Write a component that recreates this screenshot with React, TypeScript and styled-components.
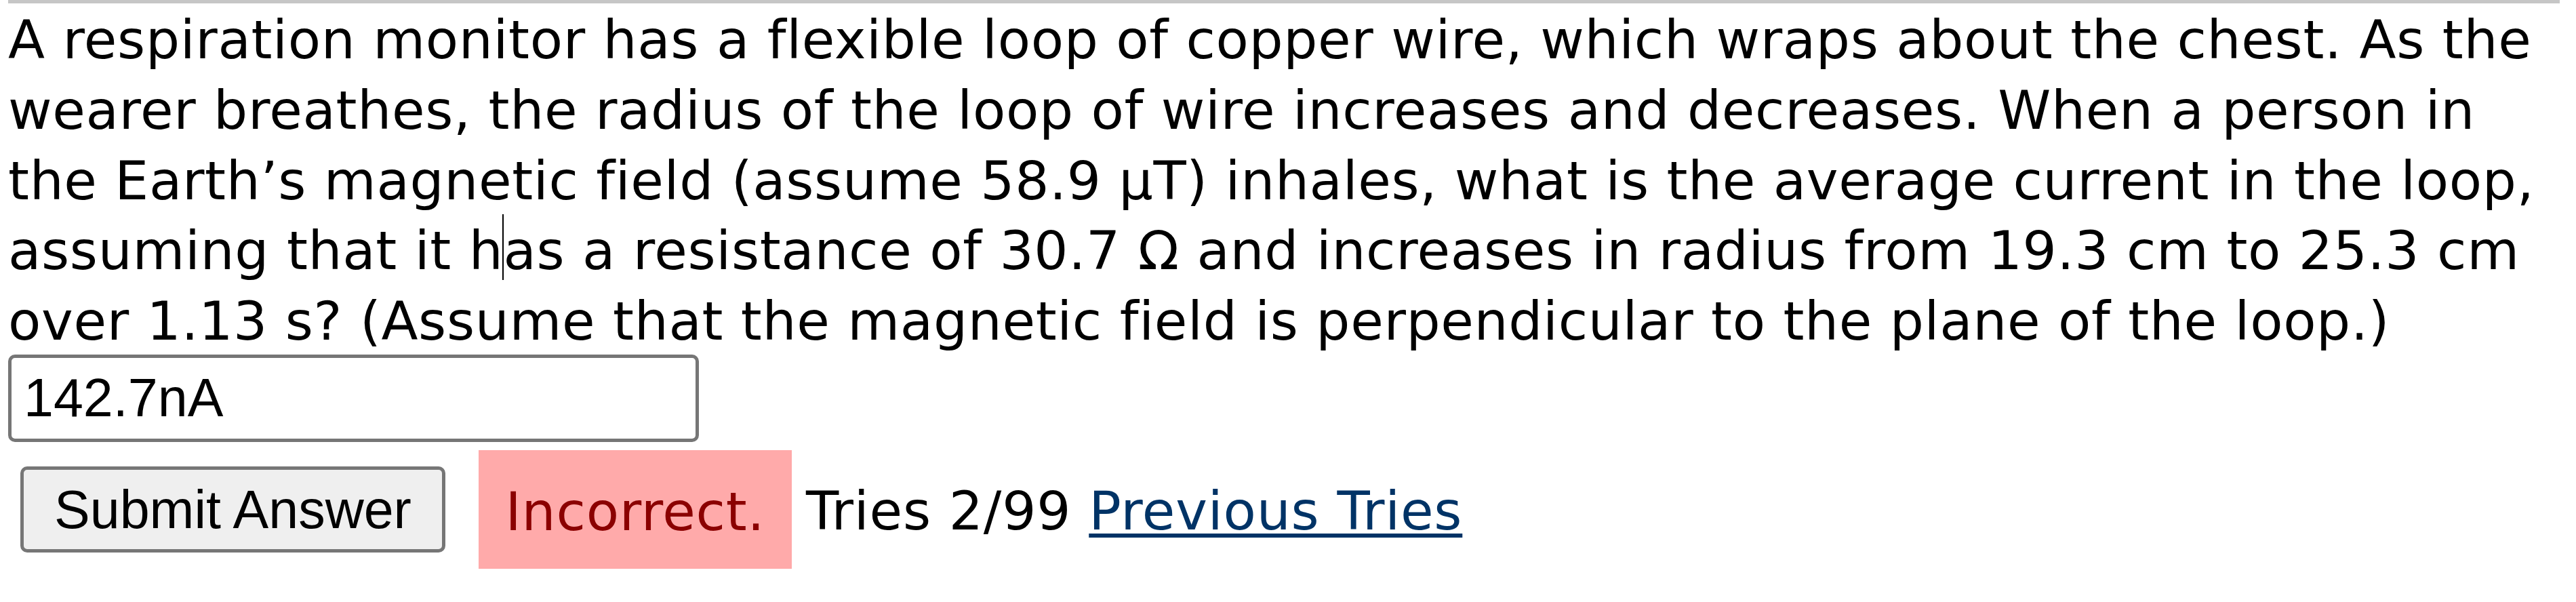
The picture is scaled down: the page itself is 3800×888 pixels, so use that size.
import React from 'react';
import styled, { createGlobalStyle } from 'styled-components';

const GlobalStyle = createGlobalStyle`
  html, body {
    margin: 0;
    padding: 0;
    background: #ffffff;
  }
  body {
    font-family: Verdana, "DejaVu Sans", sans-serif;
    font-variant-ligatures: none;
    color: #000000;
  }
`;

const Page = styled.div`
  padding: 0 24px 0 12px;
  width: 3800px;
  box-sizing: border-box;
`;

const Rule = styled.div`
  height: 5px;
  background: #c6c6c6;
`;

const Question = styled.p`
  margin: 3px 0 0 0;
  font-size: 79px;
  line-height: 103.75px;
  letter-spacing: 0.65px;
`;

const Caret = styled.span`
  display: inline-block;
  position: relative;
  width: 0;
  height: 0;

  &::after {
    content: '';
    position: absolute;
    left: -1px;
    top: -81px;
    width: 2px;
    height: 97px;
    background: #000000;
  }
`;

const AnswerInput = styled.input`
  display: block;
  box-sizing: border-box;
  width: 1019px;
  height: 129px;
  margin: -4px 0 0 0;
  padding: 14px 18px;
  border: 5px solid #767676;
  border-radius: 10px;
  font-family: Arial, "Liberation Sans", sans-serif;
  font-size: 79px;
  color: #000000;
  background: #ffffff;
  outline: none;
`;

const ResultRow = styled.div`
  display: flex;
  align-items: center;
  margin-top: 12px;
  font-size: 79px;
  line-height: 103.75px;
  letter-spacing: 0.8px;
`;

const SubmitButton = styled.button`
  box-sizing: border-box;
  width: 627px;
  height: 127px;
  margin-left: 18px;
  padding: 0 43px;
  border: 5px solid #767676;
  border-radius: 10px;
  background: #efefef;
  font-family: Arial, "Liberation Sans", sans-serif;
  font-size: 79px;
  line-height: 91px;
  letter-spacing: 0;
  color: #000000;
  white-space: nowrap;
`;

const Verdict = styled.span<{ $ok?: boolean }>`
  box-sizing: border-box;
  width: 462px;
  height: 175px;
  margin-left: 49px;
  padding: 40px 0 31px;
  text-align: center;
  background: ${(p) => (p.$ok ? '#aaffaa' : '#ffaaaa')};
  color: ${(p) => (p.$ok ? '#006400' : '#8b0000')};
  white-space: nowrap;
`;

const TriesText = styled.span`
  margin-left: 21px;
  padding-top: 8px;
  white-space: pre;
`;

const TriesLink = styled.a`
  color: #003366;
  text-decoration: underline;
  text-decoration-thickness: 6px;
  text-underline-offset: 6px;
`;

export default function App() {
  return (
    <>
      <GlobalStyle />
      <Page>
        <Rule />
        <Question>
          A respiration monitor has a flexible loop of copper wire, which wraps about the chest. As the
          wearer breathes, the radius of the loop of wire increases and decreases. When a person in the
          Earth’s magnetic field (assume 58.9 μT) inhales, what is the average current in the loop,
          assuming that it h<Caret />as a resistance of 30.7 Ω and increases in radius from 19.3 cm to
          25.3 cm over 1.13 s? (Assume that the magnetic field is perpendicular to the plane of the
          loop.)
        </Question>
        <AnswerInput type="text" defaultValue="142.7nA" />
        <ResultRow>
          <SubmitButton type="button">Submit Answer</SubmitButton>
          <Verdict>Incorrect.</Verdict>
          <TriesText>
            Tries 2/99 <TriesLink href="#">Previous Tries</TriesLink>
          </TriesText>
        </ResultRow>
      </Page>
    </>
  );
}
